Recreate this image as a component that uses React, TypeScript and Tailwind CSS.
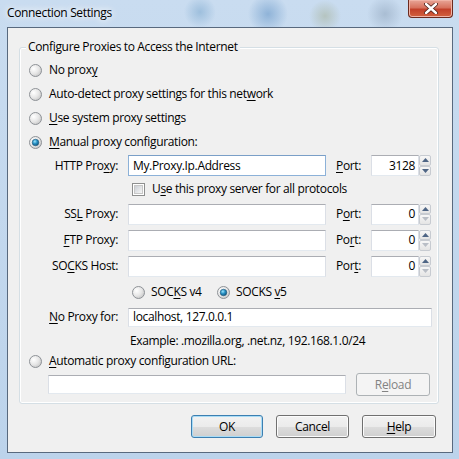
import React from 'react';

function Radio({ checked = false }: { checked?: boolean }) {
  return (
    <svg width="13" height="13" viewBox="0 0 13 13" className="shrink-0">
      <defs>
        <radialGradient id="rbg" cx="0.35" cy="0.35" r="0.7">
          <stop offset="0" stopColor="#ffffff" />
          <stop offset="0.6" stopColor="#e6e6e6" />
          <stop offset="1" stopColor="#c9c9c9" />
        </radialGradient>
        <radialGradient id="rdot" cx="0.4" cy="0.35" r="0.7">
          <stop offset="0" stopColor="#9fe3fb" />
          <stop offset="0.45" stopColor="#2b95c8" />
          <stop offset="1" stopColor="#0b4f78" />
        </radialGradient>
      </defs>
      <circle cx="6.5" cy="6.5" r="6" fill="url(#rbg)" stroke="#8e9297" strokeWidth="1" />
      {checked && <circle cx="6.5" cy="6.5" r="3.3" fill="url(#rdot)" stroke="#245b7d" strokeWidth="0.6" />}
    </svg>
  );
}

function Checkbox() {
  return (
    <div className="w-[13px] h-[13px] border border-[#8e8f8f] bg-white p-[1px] shrink-0">
      <div className="w-full h-full border border-[#c7c7c7] bg-[linear-gradient(135deg,#cbcfd5,#f6f6f6)]" />
    </div>
  );
}

function TextBox({ value = '', w, h = 'h-[21px]', focus = false }: { value?: string; w: string; h?: string; focus?: boolean }) {
  return (
    <div
      className={`${w} ${h} bg-white border flex items-center px-[4px] shrink-0 ${
        focus
          ? 'border-[#8cb1d8] border-t-[#7a9fc7]'
          : 'border-[#dbdfe6] border-t-[#abadb3] border-b-[#e3e9ef]'
      }`}
    >
      <span className="whitespace-nowrap">{value}</span>
    </div>
  );
}

function Arrow({ up, disabled }: { up: boolean; disabled?: boolean }) {
  return (
    <div className="flex-1 border border-[#c7cbd1] rounded-[2px] bg-[linear-gradient(#f7f7f7,#e4e4e4)] flex items-center justify-center">
      <svg width="7" height="4" viewBox="0 0 7 4">
        <path d={up ? 'M0 4 L3.5 0 L7 4 Z' : 'M0 0 L3.5 4 L7 0 Z'} fill={disabled ? '#b9bec6' : '#4e6585'} />
      </svg>
    </div>
  );
}

function PortBox({ value, downDisabled }: { value: string; downDisabled?: boolean }) {
  return (
    <div className="flex h-[21px]">
      <div className="w-[48px] h-full bg-white border border-[#dbdfe6] border-t-[#abadb3] border-b-[#e3e9ef] flex items-center justify-end pr-[3px]">
        {value}
      </div>
      <div className="w-[12px] h-full flex flex-col">
        <Arrow up />
        <Arrow up={false} disabled={downDisabled} />
      </div>
    </div>
  );
}

function Btn({ children, def = false, disabled = false, w = 'w-[73px]' }: { children: React.ReactNode; def?: boolean; disabled?: boolean; w?: string }) {
  if (disabled) {
    return (
      <div className={`${w} h-[23px] rounded-[3px] border border-[#adb2b5] bg-[#f4f4f4] text-[#838383] flex items-center justify-center`}>
        {children}
      </div>
    );
  }
  return (
    <div
      className={`${w} h-[23px] rounded-[3px] border ${
        def ? 'border-[#3c7fb1] shadow-[inset_0_0_0_1px_#a9dcf6]' : 'border-[#707070] shadow-[inset_0_0_0_1px_#fcfcfc]'
      } bg-[linear-gradient(#f2f2f2_0%,#ebebeb_50%,#dddddd_51%,#cfcfcf_100%)] flex items-center justify-center`}
    >
      {children}
    </div>
  );
}

const u = 'underline decoration-1 underline-offset-[2px]';

export default function App() {
  return (
    <div className="w-[459px] h-[459px] flex flex-col pl-[7px] pr-[6px] pb-[6px] text-[12px] tracking-[-0.35px] leading-[16px] text-black [font-family:'Open_Sans',sans-serif] bg-[radial-gradient(circle_at_200px_12px,#9ebfdd_0,transparent_16px),radial-gradient(circle_at_268px_14px,#8fb3d8_0,transparent_20px),radial-gradient(circle_at_325px_16px,#b5c4c0_0,transparent_16px),radial-gradient(circle_at_385px_14px,#a9bdd3_0,transparent_18px),linear-gradient(#c9dcf0,#bcd3eb)]">
      {/* title bar */}
      <div className="h-[27px] flex justify-between shrink-0">
        <div className="pt-[5px] [text-shadow:0_0_6px_#ffffff,0_0_10px_#ffffff]">Connection Settings</div>
        <div className="w-[45px] h-[18px] rounded-b-[4px] border border-t-0 border-[#6b2a1f] bg-[linear-gradient(#e8a597_0%,#d7725e_45%,#c2402a_55%,#d2623f_100%)] shadow-[inset_0_0_0_1px_#f0b3a6] flex items-center justify-center">
          <svg width="14" height="11" viewBox="0 0 14 11">
            <path d="M2 1 L12 10 M12 1 L2 10" stroke="#4a1d16" strokeWidth="4" strokeLinecap="round" />
            <path d="M2 1 L12 10 M12 1 L2 10" stroke="#ffffff" strokeWidth="2.4" strokeLinecap="round" />
          </svg>
        </div>
      </div>

      {/* client area */}
      <div className="flex-1 border border-[#58697e] bg-[#f0f0f0] flex flex-col">
        <div className="relative mt-[19px] ml-[11px] w-[420px] h-[357px] border border-[#d5dfe5] rounded-[3px] shadow-[inset_0_0_0_1px_#ffffff] flex flex-col pt-[10px]">
          <span className="absolute left-[6px] top-[-9px] px-[2px] bg-[#f0f0f0]">Configure Proxies to Access the Internet</span>

          <div className="h-[24px] flex items-center pl-[9px] gap-[7px]">
            <Radio />
            <span>No prox<span className={u}>y</span></span>
          </div>
          <div className="h-[24px] flex items-center pl-[9px] gap-[7px]">
            <Radio />
            <span>Auto-detect proxy settings for this net<span className={u}>w</span>ork</span>
          </div>
          <div className="h-[24px] flex items-center pl-[9px] gap-[7px]">
            <Radio />
            <span><span className={u}>U</span>se system proxy settings</span>
          </div>
          <div className="h-[24px] flex items-center pl-[9px] gap-[7px]">
            <Radio checked />
            <span><span className={u}>M</span>anual proxy configuration:</span>
          </div>

          <div className="h-[23px] flex items-center pl-[28px]">
            <span className="w-[70px] text-right">HTTP Pro<span className={u}>x</span>y:</span>
            <div className="ml-[10px]"><TextBox w="w-[198px]" value="My.Proxy.Ip.Address" focus /></div>
            <span className="w-[35px] ml-[10px]"><span className={u}>P</span>ort:</span>
            <PortBox value="3128" />
          </div>

          <div className="h-[24px] flex items-center pl-[112px] gap-[7px]">
            <Checkbox />
            <span>U<span className={u}>s</span>e this proxy server for all protocols</span>
          </div>

          <div className="h-[26px] flex items-center pl-[28px]">
            <span className="w-[70px] text-right">SS<span className={u}>L</span> Proxy:</span>
            <div className="ml-[10px]"><TextBox w="w-[198px]" /></div>
            <span className="w-[35px] ml-[10px]">P<span className={u}>o</span>rt:</span>
            <PortBox value="0" downDisabled />
          </div>
          <div className="h-[26px] flex items-center pl-[28px]">
            <span className="w-[70px] text-right"><span className={u}>F</span>TP Proxy:</span>
            <div className="ml-[10px]"><TextBox w="w-[198px]" /></div>
            <span className="w-[35px] ml-[10px]">Po<span className={u}>r</span>t:</span>
            <PortBox value="0" downDisabled />
          </div>
          <div className="h-[26px] flex items-center pl-[28px]">
            <span className="w-[70px] text-right whitespace-nowrap">SO<span className={u}>C</span>KS Host:</span>
            <div className="ml-[10px]"><TextBox w="w-[198px]" /></div>
            <span className="w-[35px] ml-[10px]">Por<span className={u}>t</span>:</span>
            <PortBox value="0" downDisabled />
          </div>

          <div className="h-[26px] flex items-center pl-[112px]">
            <div className="w-[85px] flex items-center gap-[6px]">
              <Radio />
              <span>SOC<span className={u}>K</span>S v4</span>
            </div>
            <div className="flex items-center gap-[6px]">
              <Radio checked />
              <span>SOCKS <span className={u}>v</span>5</span>
            </div>
          </div>

          <div className="h-[24px] flex items-center pl-[28px]">
            <span className="w-[70px] text-right whitespace-nowrap"><span className={u}>N</span>o Proxy for:</span>
            <div className="ml-[10px]"><TextBox w="w-[304px]" h="h-[19px]" value="localhost, 127.0.0.1" /></div>
          </div>

          <div className="h-[24px] flex items-center pl-[110px]">
            Example: .mozilla.org, .net.nz, 192.168.1.0/24
          </div>

          <div className="h-[16px] flex items-center pl-[9px] gap-[7px]">
            <Radio />
            <span><span className={u}>A</span>utomatic proxy configuration URL:</span>
          </div>

          <div className="h-[31px] flex items-center pl-[28px] gap-[10px]">
            <TextBox w="w-[298px]" h="h-[19px]" />
            <Btn disabled w="w-[74px]">R<span className={u}>e</span>load</Btn>
          </div>
        </div>

        <div className="mt-[11px] flex justify-end pr-[16px] gap-[13px]">
          <Btn def w="w-[72px]">OK</Btn>
          <Btn>Cancel</Btn>
          <Btn w="w-[74px]"><span className={u}>H</span>elp</Btn>
        </div>
      </div>
    </div>
  );
}
